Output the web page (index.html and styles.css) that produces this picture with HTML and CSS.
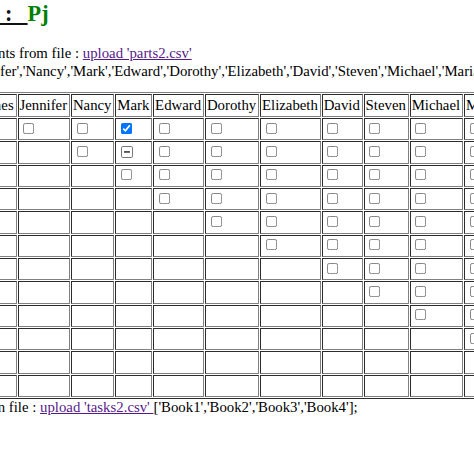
FILE: index.html
```html
<!DOCTYPE html>
<html>
<head>
<meta charset="utf-8">
<title>Readings : Pj</title>
<link rel="stylesheet" href="styles.css">
</head>
<body>
<div class="page">
  <h2 class="title"><span class="title-label">Readings :&nbsp;&nbsp;&nbsp;</span>Pj</h2>
  <p class="source">Load participants from file : <a class="link" href="#parts">upload 'parts2.csv'</a><br>[ 'James','Jennifer','Nancy','Mark','Edward','Dorothy','Elizabeth','David','Steven','Michael','Maria','Thomas','Lisa'];</p>
  <table class="grid">
    <tr><td class="who"></td><td>James</td><td>Jennifer</td><td>Nancy</td><td>Mark</td><td>Edward</td><td>Dorothy</td><td>Elizabeth</td><td>David</td><td>Steven</td><td>Michael</td><td>Maria</td><td>Thomas</td><td>Lisa</td></tr>
    <tr><td class="who">James</td><td></td><td><input type="checkbox"></td><td><input type="checkbox"></td><td><input type="checkbox" checked></td><td><input type="checkbox"></td><td><input type="checkbox"></td><td><input type="checkbox"></td><td><input type="checkbox"></td><td><input type="checkbox"></td><td><input type="checkbox"></td><td><input type="checkbox"></td><td><input type="checkbox"></td><td><input type="checkbox"></td></tr>
    <tr><td class="who">Jennifer</td><td></td><td></td><td><input type="checkbox"></td><td><input type="checkbox" class="cb-partial"></td><td><input type="checkbox"></td><td><input type="checkbox"></td><td><input type="checkbox"></td><td><input type="checkbox"></td><td><input type="checkbox"></td><td><input type="checkbox"></td><td><input type="checkbox"></td><td><input type="checkbox"></td><td><input type="checkbox"></td></tr>
    <tr><td class="who">Nancy</td><td></td><td></td><td></td><td><input type="checkbox"></td><td><input type="checkbox"></td><td><input type="checkbox"></td><td><input type="checkbox"></td><td><input type="checkbox"></td><td><input type="checkbox"></td><td><input type="checkbox"></td><td><input type="checkbox"></td><td><input type="checkbox"></td><td><input type="checkbox"></td></tr>
    <tr><td class="who">Mark</td><td></td><td></td><td></td><td></td><td><input type="checkbox"></td><td><input type="checkbox"></td><td><input type="checkbox"></td><td><input type="checkbox"></td><td><input type="checkbox"></td><td><input type="checkbox"></td><td><input type="checkbox"></td><td><input type="checkbox"></td><td><input type="checkbox"></td></tr>
    <tr><td class="who">Edward</td><td></td><td></td><td></td><td></td><td></td><td><input type="checkbox"></td><td><input type="checkbox"></td><td><input type="checkbox"></td><td><input type="checkbox"></td><td><input type="checkbox"></td><td><input type="checkbox"></td><td><input type="checkbox"></td><td><input type="checkbox"></td></tr>
    <tr><td class="who">Dorothy</td><td></td><td></td><td></td><td></td><td></td><td></td><td><input type="checkbox"></td><td><input type="checkbox"></td><td><input type="checkbox"></td><td><input type="checkbox"></td><td><input type="checkbox"></td><td><input type="checkbox"></td><td><input type="checkbox"></td></tr>
    <tr><td class="who">Elizabeth</td><td></td><td></td><td></td><td></td><td></td><td></td><td></td><td><input type="checkbox"></td><td><input type="checkbox"></td><td><input type="checkbox"></td><td><input type="checkbox"></td><td><input type="checkbox"></td><td><input type="checkbox"></td></tr>
    <tr><td class="who">David</td><td></td><td></td><td></td><td></td><td></td><td></td><td></td><td></td><td><input type="checkbox"></td><td><input type="checkbox"></td><td><input type="checkbox"></td><td><input type="checkbox"></td><td><input type="checkbox"></td></tr>
    <tr><td class="who">Steven</td><td></td><td></td><td></td><td></td><td></td><td></td><td></td><td></td><td></td><td><input type="checkbox"></td><td><input type="checkbox"></td><td><input type="checkbox"></td><td><input type="checkbox"></td></tr>
    <tr><td class="who">Michael</td><td></td><td></td><td></td><td></td><td></td><td></td><td></td><td></td><td></td><td></td><td><input type="checkbox"></td><td><input type="checkbox"></td><td><input type="checkbox"></td></tr>
    <tr><td class="who">Maria</td><td></td><td></td><td></td><td></td><td></td><td></td><td></td><td></td><td></td><td></td><td></td><td><input type="checkbox"></td><td><input type="checkbox"></td></tr>
    <tr><td class="who">Thomas</td><td></td><td></td><td></td><td></td><td></td><td></td><td></td><td></td><td></td><td></td><td></td><td></td><td><input type="checkbox"></td></tr>
  </table>
  <div class="tasks">Loaded tasks in file : <a class="link" href="#tasks">upload 'tasks2.csv' </a>['Book1','Book2','Book3','Book4'];</div>
</div>
</body>
</html>
```

FILE: styles.css
```css
html {
  zoom: 0.92578;
  overflow: hidden;
}

body {
  margin: 0;
  overflow: hidden;
  font-family: "Liberation Serif", "Times New Roman", serif;
  font-size: 16px;
  color: #000;
  background: #fff;
}

.page {
  margin-left: -94.8px;
  padding-top: 1px;
}

.title {
  margin: 0 0 18px;
  font-size: 24px;
  line-height: 28.4px;
  font-weight: bold;
  color: #008000;
  white-space: nowrap;
}

.title-label {
  color: #111;
  text-decoration: underline;
  word-spacing: -0.5px;
}

.source {
  margin: 0 0 12.5px;
  line-height: 20px;
  white-space: nowrap;
}

.link {
  color: #551a8b;
  text-decoration: underline;
}

.grid {
  border: 1px outset #808080;
  border-spacing: 2px;
}

.grid td {
  border: 1px inset #808080;
  padding: 1px 2px 1px 1px;
  line-height: 20px;
  white-space: nowrap;
}

.grid .who {
  padding-left: 8.2px;
  font-size: 14px;
}

.grid input {
  margin: 3px 3px 3px 4px;
  vertical-align: top;
}

.grid .cb-partial {
  appearance: none;
  -webkit-appearance: none;
  box-sizing: border-box;
  width: 13px;
  height: 13px;
  border: 1px solid #767676;
  border-radius: 2px;
  background: #fff linear-gradient(#555, #555) center / 7px 2px no-repeat;
}

.tasks {
  margin-top: 0;
  line-height: 19px;
  white-space: nowrap;
}
```
